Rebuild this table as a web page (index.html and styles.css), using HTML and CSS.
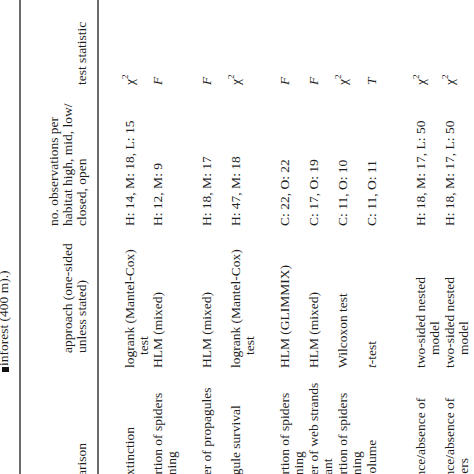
FILE: index.html
```html
<!DOCTYPE html>
<html lang="en">
<head>
<meta charset="utf-8">
<title>Table</title>
<link rel="stylesheet" href="styles.css">
</head>
<body>
<div class="page">
  <div class="sheet">
    <p class="caption"><span class="blot"></span>inforest (400 m).)</p>
    <table class="stats">
      <colgroup>
        <col class="c-cmp">
        <col class="c-app">
        <col class="c-obs">
        <col class="c-stat">
      </colgroup>
      <thead>
        <tr>
          <th class="cmp">comparison</th>
          <th class="app">approach (one-sided<br>unless stated)</th>
          <th class="obs">no. observations per<br>habitat high, mid, low/<br>closed, open</th>
          <th class="stat">test statistic</th>
        </tr>
      </thead>
      <tbody>
        <tr class="first">
          <td>nest extinction</td>
          <td class="app">logrank (Mantel-Cox)<br>test</td>
          <td>H: 14, M: 18, L: 15</td>
          <td>χ<sup>2</sup></td>
        </tr>
        <tr>
          <td>proportion of spiders<br>remaining</td>
          <td class="app">HLM (mixed)</td>
          <td>H: 12, M: 9</td>
          <td><i>F</i></td>
        </tr>
        <tr class="sect">
          <td>number of propagules</td>
          <td class="app">HLM (mixed)</td>
          <td>H: 18, M: 17</td>
          <td><i>F</i></td>
        </tr>
        <tr>
          <td>propagule survival</td>
          <td class="app">logrank (Mantel-Cox)<br>test</td>
          <td>H: 47, M: 18</td>
          <td>χ<sup>2</sup></td>
        </tr>
        <tr class="sect">
          <td>proportion of spiders<br>remaining</td>
          <td class="app">HLM (GLIMMIX)</td>
          <td>C: 22, O: 22</td>
          <td><i>F</i></td>
        </tr>
        <tr>
          <td>number of web strands<br>per plant</td>
          <td class="app">HLM (mixed)</td>
          <td>C: 17, O: 19</td>
          <td><i>F</i></td>
        </tr>
        <tr>
          <td>proportion of spiders<br>remaining</td>
          <td class="app">Wilcoxon test</td>
          <td>C: 11, O: 10</td>
          <td>χ<sup>2</sup></td>
        </tr>
        <tr>
          <td>web volume</td>
          <td class="app"><i>t</i>-test</td>
          <td>C: 11, O: 11</td>
          <td><i>T</i></td>
        </tr>
        <tr class="sect">
          <td>presence/absence of<br>ants</td>
          <td class="app">two-sided nested<br>model</td>
          <td>H: 18, M: 17, L: 50</td>
          <td>χ<sup>2</sup></td>
        </tr>
        <tr>
          <td>presence/absence of<br>intruders</td>
          <td class="app">two-sided nested<br>model</td>
          <td>H: 18, M: 17, L: 50</td>
          <td>χ<sup>2</sup></td>
        </tr>
      </tbody>
    </table>
  </div>
</div>
</body>
</html>
```

FILE: styles.css
```css
html, body {
  margin: 0;
  padding: 0;
  background: #ffffff;
}

.page {
  width: 474px;
  height: 474px;
  overflow: hidden;
}

.sheet {
  width: 474px;
  height: 474px;
  overflow: hidden;
  transform: rotate(-90deg);
  font-family: "Liberation Serif", "Times New Roman", serif;
  font-size: 13.5px;
  line-height: 14px;
  color: #1e1e1e;
  background: #ffffff;
}

.caption {
  margin: -3px 0 0;
  padding-left: 102px;
  height: 14px;
  white-space: nowrap;
}

.blot {
  display: inline-block;
  width: 5px;
  height: 7px;
  background: #111111;
  vertical-align: -1px;
  margin-right: 1px;
}

.stats {
  border-collapse: collapse;
  table-layout: fixed;
  width: 521px;
  margin: 8px 0 0 -32px;
  border-top: 2px solid #6b6b6b;
}

.c-cmp { width: 138px; }
.c-app { width: 142px; }
.c-obs { width: 141px; }
.c-stat { width: 100px; }

.stats th {
  font-weight: normal;
  text-align: left;
  vertical-align: bottom;
  padding: 0 0 8px;
  height: 68px;
  border-bottom: 2px solid #6b6b6b;
  white-space: nowrap;
}

.stats th.app {
  padding-left: 15px;
}

.stats td {
  vertical-align: top;
  text-align: left;
  padding: 0;
  white-space: nowrap;
}

.stats tbody tr {
  height: 29px;
}

.stats tr.first {
  height: 53px;
}

.stats tr.first td {
  padding-top: 24px;
}

.stats tr.sect {
  height: 49px;
}

.stats tr.sect td {
  padding-top: 20px;
}

.stats td.app {
  padding-left: 13px;
  text-indent: -13px;
}

.stats sup {
  font-size: 9px;
  line-height: 0;
  vertical-align: 6px;
}
```
